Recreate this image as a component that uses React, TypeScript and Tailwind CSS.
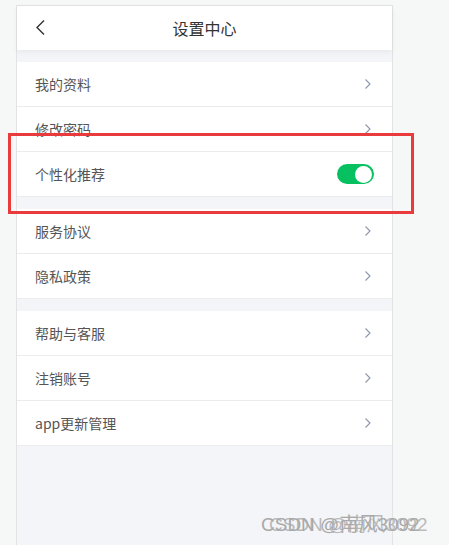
import React from 'react';

const Chevron = () => (
  <svg width="8" height="12" viewBox="0 0 8 12" fill="none" className="shrink-0">
    <path d="M1.5 1.5 L6 6 L1.5 10.5" stroke="#8c96a8" strokeWidth="1.1" />
  </svg>
);

const Row = ({ label, children }: { label: string; children?: React.ReactNode }) => (
  <div className="flex h-[45px] items-center justify-between border-b border-[#ececec] bg-white pl-[18px] pr-[20px]">
    <span className="text-[14px] text-[#555]">{label}</span>
    {children ?? <Chevron />}
  </div>
);

const Toggle = () => (
  <div className="flex h-[20px] w-[37px] items-center justify-end rounded-full bg-[#07c160] p-[2px] -mr-[2px]">
    <div className="h-[17px] w-[17px] rounded-full bg-white" />
  </div>
);

export default function App() {
  const groups = [
    ['我的资料', '修改密码', '个性化推荐'],
    ['服务协议', '隐私政策'],
    ['帮助与客服', '注销账号', 'app更新管理'],
  ];

  return (
    <div
      className="relative h-[545px] w-full overflow-hidden bg-[#f6f7f7] pl-[16px] pt-[5px]"
      style={{ fontFamily: '"Noto Sans CJK SC", "Noto Sans", sans-serif' }}
    >
      <div className="flex h-[540px] w-[377px] flex-col border-x border-t border-[#e3e3e3] bg-[#f4f5f8]">
        {/* header */}
        <div className="relative z-10 flex h-[44px] shrink-0 items-center justify-center bg-white shadow-[0_2px_6px_rgba(0,0,0,0.06)]">
          <svg width="12" height="18" viewBox="0 0 12 18" fill="none" className="absolute left-[18px] top-[13px]">
            <path d="M9 1.5 L2 8.5 L9 15.5" stroke="#333" strokeWidth="1.4" />
          </svg>
          <span className="text-[16px] text-[#333]">设置中心</span>
        </div>

        <div className="flex flex-col gap-[12px] pt-[12px]">
          {groups.map((g, i) => (
            <div key={i} className="flex flex-col">
              {g.map((label) =>
                label === '个性化推荐' ? (
                  <Row key={label} label={label}>
                    <Toggle />
                  </Row>
                ) : (
                  <Row key={label} label={label} />
                ),
              )}
            </div>
          ))}
        </div>
      </div>

      {/* annotation box */}
      <div className="absolute left-[8px] top-[133px] h-[81px] w-[406px] border-[3px] border-[#e93b3b]" />

      {/* watermark */}
      <div
        className="absolute left-[261px] top-[514px] whitespace-nowrap text-[19px] leading-[22px] text-[#a9a9a9] [text-shadow:8px_0_0_rgba(160,160,160,0.7)]"
        style={{ fontFamily: '"Liberation Sans", "Noto Sans CJK SC", sans-serif' }}
      >
        CSDN @南风3092
      </div>
    </div>
  );
}
